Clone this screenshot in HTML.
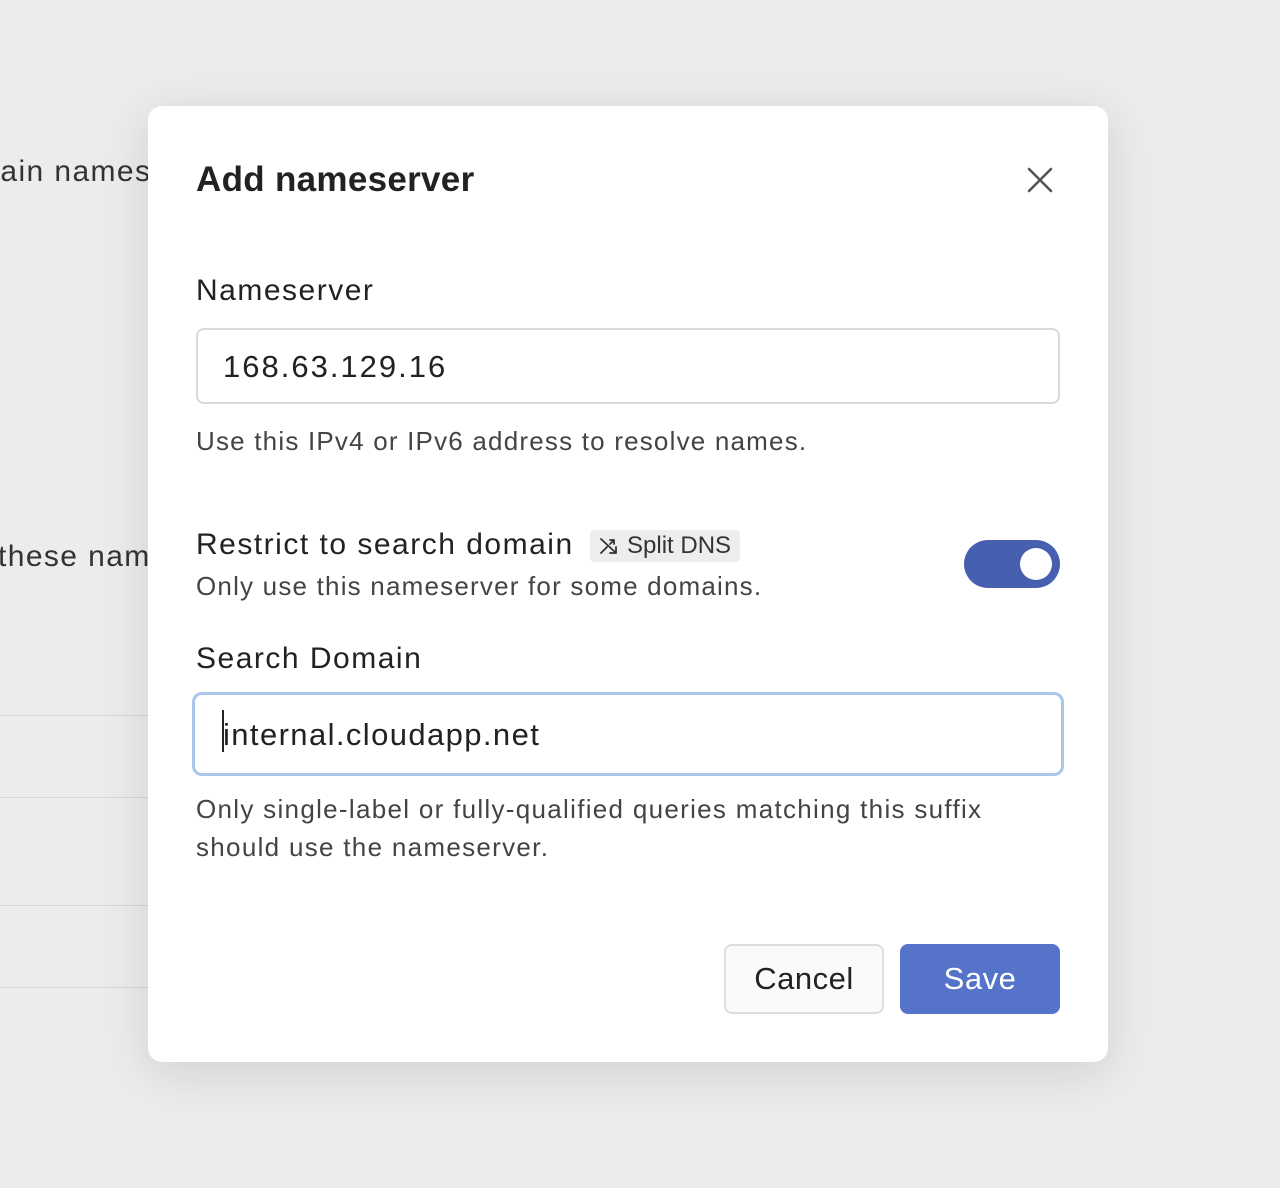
<!DOCTYPE html>
<html><head><style>
html,body{margin:0;padding:0}
body{width:1280px;height:1188px;background:#ececec;position:relative;overflow:hidden;font-family:"Liberation Sans",sans-serif;color:#222}
.bg{position:absolute;color:#333;font-size:30px;letter-spacing:1.4px}
.line{position:absolute;left:0;width:150px;height:1px;background:#d6d6d6}
.modal{position:absolute;left:148px;top:106px;width:960px;height:956px;background:#fff;border-radius:14px;box-shadow:0 10px 50px rgba(0,0,0,0.12)}
.abs{position:absolute}
h1{position:absolute;left:48px;top:54px;margin:0;font-size:35px;font-weight:bold;color:#222;letter-spacing:0.3px}
.lbl{font-size:30px;color:#222;letter-spacing:1.5px}
.help{font-size:26px;color:#444;letter-spacing:1.2px}
.input{position:absolute;box-sizing:border-box;border:2px solid #d9d9d9;border-radius:8px;font-size:31px;color:#222;padding-left:25px}
.btn{position:absolute;box-sizing:border-box;border-radius:8px;font-size:31px;display:flex;align-items:center;justify-content:center;letter-spacing:0.5px}
</style></head><body>
<div class="bg" style="left:-26px;top:155px">main names</div>
<div class="bg" style="left:-2px;top:540px">these nam</div>
<div class="line" style="top:715px"></div>
<div class="line" style="top:797px"></div>
<div class="line" style="top:905px"></div>
<div class="line" style="top:987px"></div>
<div class="modal">
<h1>Add nameserver</h1>
<svg class="abs" style="left:878px;top:60px" width="28" height="28" viewBox="0 0 28 28"><path d="M3 3L25 25M25 3L3 25" stroke="#555" stroke-width="2.6" stroke-linecap="round"/></svg>
<div class="abs lbl" style="left:48px;top:168px">Nameserver</div>
<div class="input" style="left:48px;top:222px;width:864px;height:76px;line-height:74px;letter-spacing:2px">168.63.129.16</div>
<div class="abs help" style="left:48px;top:320px">Use this IPv4 or IPv6 address to resolve names.</div>
<div class="abs lbl" style="left:48px;top:422px">Restrict to search domain</div>
<div class="abs" style="left:442px;top:424px;height:32px;padding:0 9px;background:#ededed;border-radius:4px;font-size:24px;color:#333;line-height:32px;display:flex;align-items:center">
<svg width="20" height="20" viewBox="0 0 20 20" style="margin-right:8px"><path d="M2 3L17 17M17 17V11M17 17H11M2 17L8 11M11 8L15 4M15 4H11M15 4V8" stroke="#333" stroke-width="1.8" fill="none" stroke-linecap="round"/></svg>Split DNS</div>
<div class="abs help" style="left:48px;top:465px">Only use this nameserver for some domains.</div>
<div class="abs" style="left:816px;top:434px;width:96px;height:48px;border-radius:24px;background:#465fae"><div class="abs" style="right:8px;top:8px;width:32px;height:32px;border-radius:50%;background:#fff"></div></div>
<div class="abs lbl" style="left:48px;top:536px">Search Domain</div>
<div class="input" style="left:44px;top:586px;width:872px;height:84px;line-height:80px;border:3px solid #a9c7ec;border-radius:10px;padding-left:28px;letter-spacing:1.4px">internal.cloudapp.net</div>
<div class="abs" style="left:74px;top:604px;width:2px;height:42px;background:#222"></div>
<div class="abs help" style="left:48px;top:684px;line-height:38px;letter-spacing:1.3px">Only single-label or fully-qualified queries matching this suffix<br>should use the nameserver.</div>
<div class="btn" style="left:576px;top:838px;width:160px;height:70px;border:2px solid #ddd;background:#fafafa;color:#222">Cancel</div>
<div class="btn" style="left:752px;top:838px;width:160px;height:70px;background:#5473c9;color:#fff">Save</div>
</div>
</body></html>
